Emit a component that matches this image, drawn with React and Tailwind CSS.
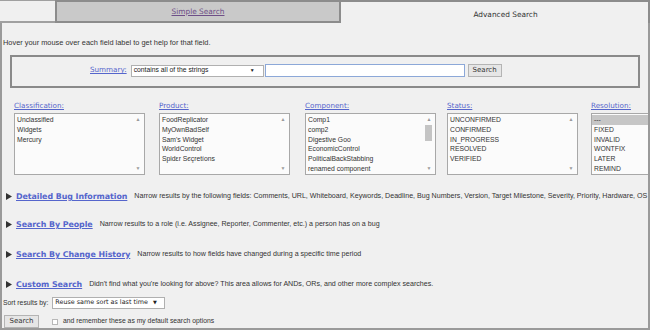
import React from "react";

const A = { fontFamily: '"Liberation Sans", Arial, sans-serif' };
const V = { fontFamily: '"DejaVu Sans", Verdana, sans-serif' };

function ListBox({ items, thumb, selected }) {
  return (
    <div className="relative w-[131px] h-[62px] border border-[#a8a8a8] bg-[#fbfbfb] shrink-0">
      <div className="pt-[1px] pl-[2px] text-[6.8px] leading-[9.8px] text-[#333]" style={A}>
        {items.map((it, i) => (
          <div key={i} className={i === 0 && selected ? "bg-[#c6c6c6] -ml-[2px] pl-[2px]" : ""}>
            {it}
          </div>
        ))}
      </div>
      {!selected && (
        <div className="absolute right-0 top-0 bottom-0 w-[12px] flex flex-col items-center justify-between py-[2px] text-[5px] text-[#9a9a9a]">
          <span>▲</span>
          {thumb && <div className="absolute top-[11px] left-[2px] w-[7px] h-[16px] bg-[#c4c4c4]" />}
          <span>▼</span>
        </div>
      )}
    </div>
  );
}

function Field({ label, items, thumb, selected }) {
  return (
    <div className="flex flex-col gap-[3px]">
      <a className="text-[7.2px] leading-[9px] text-[#5565cc] underline" style={V}>
        {label}
      </a>
      <ListBox items={items} thumb={thumb} selected={selected} />
    </div>
  );
}

function Section({ title, desc, mt }) {
  return (
    <div className={`flex items-center pl-[4px] ${mt}`}>
      <svg width="6" height="7" viewBox="0 0 6 7" className="mr-[4px] shrink-0">
        <path d="M0 0 L6 3.5 L0 7 Z" fill="#333" />
      </svg>
      <a
        className="text-[7.9px] leading-[11px] font-bold text-[#5565cc] underline decoration-[0.5px] tracking-[-0.05px] mr-[7px] whitespace-nowrap"
        style={V}
      >
        {title}
      </a>
      <span className="text-[7.1px] text-[#333] whitespace-nowrap" style={A}>
        {desc}
      </span>
    </div>
  );
}

export default function App() {
  return (
    <div className="w-[650px] h-[330px] bg-[#f0f0f0] overflow-hidden flex flex-col">
      <div className="flex h-[23px] shrink-0">
        <div className="w-[55px] border-t border-b-2 border-[#a0a0a0] bg-[#f0f0f0]" />
        <div className="w-[286px] bg-[#c9c9c9] border-2 border-[#8c8c8c] flex items-center justify-center">
          <a className="text-[7.4px] text-[#6e4f87] underline" style={V}>
            Simple Search
          </a>
        </div>
        <div className="flex-1 border-t-2 border-r-2 border-[#8c8c8c] flex items-start justify-center pt-[7px]">
          <span className="text-[7.4px] text-[#333] ml-[22px]" style={V}>
            Advanced Search
          </span>
        </div>
      </div>
      <div className="flex-1 border-l-2 border-r-2 border-b-2 border-[#9a9a9a] flex flex-col overflow-hidden">
        <div className="pl-[1px] mt-[15px] text-[7.4px] leading-[9px] text-[#333]" style={A}>
          Hover your mouse over each field label to get help for that field.
        </div>
        <div className="mx-[8px] mt-[8px] h-[33px] border-2 border-[#8a8a8a] flex items-center pl-[78px] pb-[2px]">
          <a className="text-[7.2px] text-[#5565cc] underline mr-[4px]" style={V}>
            Summary:
          </a>
          <div
            className="w-[133px] h-[12px] bg-white border border-[#b0b0b0] flex items-center justify-between px-[2px] text-[6.8px] text-[#222]"
            style={A}
          >
            <span>contains all of the strings</span>
            <span className="text-[5px] mr-[6px]">▼</span>
          </div>
          <div className="w-[200px] h-[13px] bg-white border border-[#8ca8d8] ml-[1px]" />
          <div
            className="ml-[3px] w-[34px] h-[13px] bg-[#e6e6e6] border border-[#b4b4b4] flex items-center justify-center text-[7px] text-[#333]"
            style={V}
          >
            Search
          </div>
        </div>
        <div className="flex mt-[13px] pl-[12px]">
          <div className="w-[145px] shrink-0">
            <Field label="Classification:" items={["Unclassified", "Widgets", "Mercury"]} />
          </div>
          <div className="w-[146px] shrink-0">
            <Field
              label="Product:"
              items={["FoodReplicator", "MyOwnBadSelf", "Sam's Widget", "WorldControl", "Spidεr Sєçretíons"]}
            />
          </div>
          <div className="w-[142px] shrink-0">
            <Field
              label="Component:"
              thumb
              items={["Comp1", "comp2", "Digestive Goo", "EconomicControl", "PoliticalBackStabbing", "renamed component"]}
            />
          </div>
          <div className="w-[144px] shrink-0">
            <Field
              label="Status:"
              items={["UNCONFIRMED", "CONFIRMED", "IN_PROGRESS", "RESOLVED", "VERIFIED"]}
            />
          </div>
          <div className="w-[131px] shrink-0">
            <Field
              label="Resolution:"
              selected
              items={["---", "FIXED", "INVALID", "WONTFIX", "LATER", "REMIND"]}
            />
          </div>
        </div>
        <Section
          mt="mt-[16px]"
          title="Detailed Bug Information"
          desc="Narrow results by the following fields: Comments, URL, Whiteboard, Keywords, Deadline, Bug Numbers, Version, Target Milestone, Severity, Priority, Hardware, OS"
        />
        <Section
          mt="mt-[17px]"
          title="Search By People"
          desc="Narrow results to a role (i.e. Assignee, Reporter, Commenter, etc.) a person has on a bug"
        />
        <Section
          mt="mt-[19px]"
          title="Search By Change History"
          desc="Narrow results to how fields have changed during a specific time period"
        />
        <Section
          mt="mt-[19px]"
          title="Custom Search"
          desc="Didn't find what you're looking for above? This area allows for ANDs, ORs, and other more complex searches."
        />
        <div className="flex items-center mt-[7px] pl-[1px]">
          <span className="text-[6.8px] text-[#333] mr-[4px]" style={A}>
            Sort results by:
          </span>
          <div
            className="h-[12px] w-[113px] bg-white border border-[#b0b0b0] flex items-center px-[2px] text-[6.8px] text-[#222]"
            style={V}
          >
            <span className="text-[6.4px]">Reuse same sort as last time</span>
            <span className="text-[5px] ml-[5px]">▼</span>
          </div>
        </div>
        <div className="flex items-center mt-[6px] pl-[2px]">
          <div
            className="w-[35px] h-[13px] bg-[#e6e6e6] border border-[#b4b4b4] flex items-center justify-center text-[7px] text-[#333]"
            style={V}
          >
            Search
          </div>
          <div className="ml-[13px] w-[6px] h-[6px] border border-[#b8b8b8] bg-white" />
          <span className="ml-[5px] text-[6.8px] text-[#333]" style={A}>
            and remember these as my default search options
          </span>
        </div>
      </div>
    </div>
  );
}
